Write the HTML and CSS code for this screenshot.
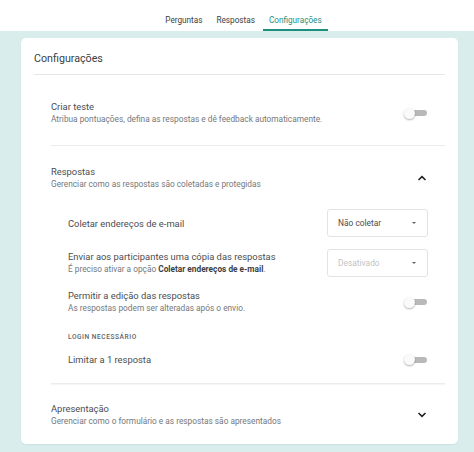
FILE: index.html
```html
<!DOCTYPE html>
<html lang="pt">
<head>
  <meta charset="UTF-8">
  <meta name="viewport" content="width=device-width, initial-scale=1.0">
  <title>Configurações</title>
  <link rel="stylesheet" href="styles.css">
</head>
<body>
  <header class="tabs">
    <a class="tab">Perguntas</a>
    <a class="tab">Respostas</a>
    <a class="tab active">Configurações</a>
  </header>

  <main class="page">
    <div class="card">
      <h2 class="card-title">Configurações</h2>

      <div class="section">
        <div class="row">
          <div class="text">
            <div class="title">Criar teste</div>
            <div class="desc">Atribua pontuações, defina as respostas e dê feedback automaticamente.</div>
          </div>
          <span class="toggle"></span>
        </div>
      </div>

      <div class="section open">
        <div class="row">
          <div class="text">
            <div class="title">Respostas</div>
            <div class="desc">Gerenciar como as respostas são coletadas e protegidas</div>
          </div>
          <svg class="chevron" width="10" height="6" viewBox="0 0 10 6"><path d="M1.5 5L5 1.6 8.5 5" fill="none" stroke="#202124" stroke-width="1.6"/></svg>
        </div>

        <div class="items">
          <div class="item">
            <div class="text">
              <div class="title">Coletar endereços de e-mail</div>
            </div>
            <div class="select">Não coletar <span class="arrow"></span></div>
          </div>

          <div class="item">
            <div class="text">
              <div class="title">Enviar aos participantes uma cópia das respostas</div>
              <div class="desc">É preciso ativar a opção <b>Coletar endereços de e-mail</b>.</div>
            </div>
            <div class="select disabled">Desativado <span class="arrow"></span></div>
          </div>

          <div class="item">
            <div class="text">
              <div class="title">Permitir a edição das respostas</div>
              <div class="desc">As respostas podem ser alteradas após o envio.</div>
            </div>
            <span class="toggle"></span>
          </div>

          <div class="label">LOGIN NECESSÁRIO</div>

          <div class="item">
            <div class="text">
              <div class="title">Limitar a 1 resposta</div>
            </div>
            <span class="toggle"></span>
          </div>
        </div>
      </div>

      <div class="section last">
        <div class="row">
          <div class="text">
            <div class="title">Apresentação</div>
            <div class="desc">Gerenciar como o formulário e as respostas são apresentados</div>
          </div>
          <svg class="chevron" width="10" height="6" viewBox="0 0 10 6"><path d="M1.5 1L5 4.4 8.5 1" fill="none" stroke="#202124" stroke-width="1.6"/></svg>
        </div>
      </div>
    </div>
  </main>
</body>
</html>
```

FILE: styles.css
```css
* { box-sizing: border-box; }
body { margin: 0; font-family: Roboto, "Liberation Sans", sans-serif; color: #3c4043; background: #d9eeec; height: 452px; overflow: hidden; }

.tabs { height: 31px; background: #fff; display: flex; justify-content: center; align-items: stretch; gap: 2px; padding-left: 13px; }
.tab { font-size: 8.2px; color: #3c4043; padding: 15px 6px 0; border-bottom: 2.5px solid transparent; font-weight: 400; }
.tab.active { color: #1e8e7e; border-bottom-color: #1e8e7e; }

.page { padding: 7px 16px 0 21px; }
.card { background: #fff; border-radius: 5px; height: 406px; padding: 0 13px; box-shadow: 0 1px 2px rgba(0,0,0,0.06); }
.card-title { margin: 0; font-size: 10.7px; font-weight: 400; line-height: 16px; padding: 13px 0 7px; border-bottom: 1px solid #e6e6e6; color: #3c4043; }

.section { margin-left: 17px; padding-right: 17px; border-bottom: 1px solid #ececec; }
.section .row { display: flex; align-items: center; justify-content: space-between; }
.section:nth-of-type(1) .row { padding: 25px 0 19px; }
.section.open { padding-top: 19px; padding-bottom: 17px; box-shadow: 0 1px 1px rgba(0,0,0,0.04); }
.section.last { border-bottom: none; padding-top: 18px; }

.title { font-size: 9.4px; line-height: 13px; color: #4a4d51; font-weight: 400; }
.desc { font-size: 8.3px; line-height: 13px; color: #74787c; }
.desc b { color: #3c4043; font-weight: 700; }

.chevron { margin-right: 1px; }

.items { padding-left: 17px; padding-top: 18px; display: flex; flex-direction: column; gap: 12px; }
.item { display: flex; align-items: center; justify-content: space-between; }

.select { width: 101px; height: 28px; border: 1px solid #e3e3e3; border-radius: 3px; font-size: 8.4px; color: #4a4d51; display: flex; align-items: center; justify-content: space-between; padding: 0 11px 0 10px; }
.select.disabled { color: #c4c4c4; }
.arrow { width: 0; height: 0; border-left: 2.5px solid transparent; border-right: 2.5px solid transparent; border-top: 2.5px solid #5f6368; }

.label { font-size: 6.6px; letter-spacing: 0.55px; color: #5f6368; font-weight: 500; line-height: 10px; margin-top: 5px; margin-bottom: -1px; }

.toggle { position: relative; width: 22px; height: 6px; background: #b9b9b9; border-radius: 3px; margin-right: 1px; }
.toggle::before { content: ""; position: absolute; left: -1px; top: -2.5px; width: 11px; height: 11px; border-radius: 50%; background: #fafafa; box-shadow: 0 1px 2px rgba(0,0,0,0.3); }
```
